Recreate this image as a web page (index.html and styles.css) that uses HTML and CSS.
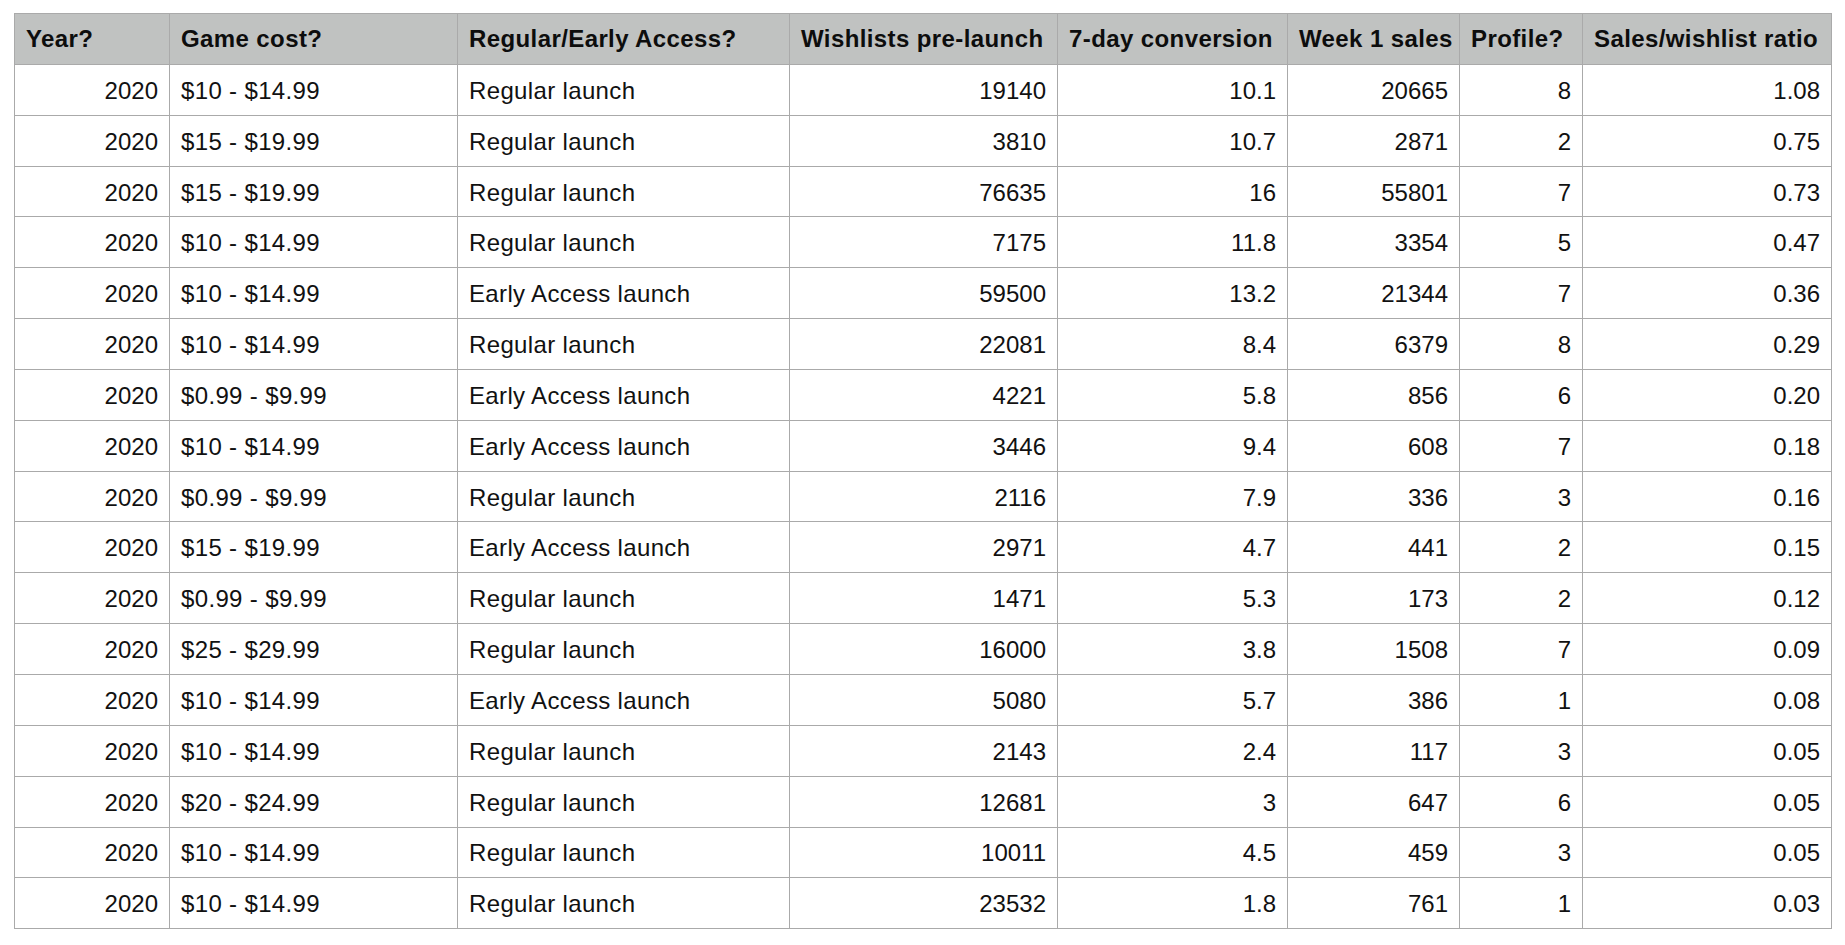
FILE: index.html
```html
<!DOCTYPE html>
<html>
<head>
<meta charset="utf-8">
<link rel="stylesheet" href="styles.css">
</head>
<body>
<div class="page">
<table class="sheet">
<colgroup>
<col class="c1"><col class="c2"><col class="c3"><col class="c4"><col class="c5"><col class="c6"><col class="c7"><col class="c8">
</colgroup>
<thead>
<tr><th>Year?</th><th>Game cost?</th><th>Regular/Early Access?</th><th>Wishlists pre-launch</th><th>7-day conversion</th><th>Week 1 sales</th><th>Profile?</th><th>Sales/wishlist ratio</th></tr>
</thead>
<tbody>
<tr><td class="n">2020</td><td>$10 - $14.99</td><td>Regular launch</td><td class="n">19140</td><td class="n">10.1</td><td class="n">20665</td><td class="n">8</td><td class="n">1.08</td></tr>
<tr><td class="n">2020</td><td>$15 - $19.99</td><td>Regular launch</td><td class="n">3810</td><td class="n">10.7</td><td class="n">2871</td><td class="n">2</td><td class="n">0.75</td></tr>
<tr><td class="n">2020</td><td>$15 - $19.99</td><td>Regular launch</td><td class="n">76635</td><td class="n">16</td><td class="n">55801</td><td class="n">7</td><td class="n">0.73</td></tr>
<tr><td class="n">2020</td><td>$10 - $14.99</td><td>Regular launch</td><td class="n">7175</td><td class="n">11.8</td><td class="n">3354</td><td class="n">5</td><td class="n">0.47</td></tr>
<tr><td class="n">2020</td><td>$10 - $14.99</td><td>Early Access launch</td><td class="n">59500</td><td class="n">13.2</td><td class="n">21344</td><td class="n">7</td><td class="n">0.36</td></tr>
<tr><td class="n">2020</td><td>$10 - $14.99</td><td>Regular launch</td><td class="n">22081</td><td class="n">8.4</td><td class="n">6379</td><td class="n">8</td><td class="n">0.29</td></tr>
<tr><td class="n">2020</td><td>$0.99 - $9.99</td><td>Early Access launch</td><td class="n">4221</td><td class="n">5.8</td><td class="n">856</td><td class="n">6</td><td class="n">0.20</td></tr>
<tr><td class="n">2020</td><td>$10 - $14.99</td><td>Early Access launch</td><td class="n">3446</td><td class="n">9.4</td><td class="n">608</td><td class="n">7</td><td class="n">0.18</td></tr>
<tr><td class="n">2020</td><td>$0.99 - $9.99</td><td>Regular launch</td><td class="n">2116</td><td class="n">7.9</td><td class="n">336</td><td class="n">3</td><td class="n">0.16</td></tr>
<tr><td class="n">2020</td><td>$15 - $19.99</td><td>Early Access launch</td><td class="n">2971</td><td class="n">4.7</td><td class="n">441</td><td class="n">2</td><td class="n">0.15</td></tr>
<tr><td class="n">2020</td><td>$0.99 - $9.99</td><td>Regular launch</td><td class="n">1471</td><td class="n">5.3</td><td class="n">173</td><td class="n">2</td><td class="n">0.12</td></tr>
<tr><td class="n">2020</td><td>$25 - $29.99</td><td>Regular launch</td><td class="n">16000</td><td class="n">3.8</td><td class="n">1508</td><td class="n">7</td><td class="n">0.09</td></tr>
<tr><td class="n">2020</td><td>$10 - $14.99</td><td>Early Access launch</td><td class="n">5080</td><td class="n">5.7</td><td class="n">386</td><td class="n">1</td><td class="n">0.08</td></tr>
<tr><td class="n">2020</td><td>$10 - $14.99</td><td>Regular launch</td><td class="n">2143</td><td class="n">2.4</td><td class="n">117</td><td class="n">3</td><td class="n">0.05</td></tr>
<tr><td class="n">2020</td><td>$20 - $24.99</td><td>Regular launch</td><td class="n">12681</td><td class="n">3</td><td class="n">647</td><td class="n">6</td><td class="n">0.05</td></tr>
<tr><td class="n">2020</td><td>$10 - $14.99</td><td>Regular launch</td><td class="n">10011</td><td class="n">4.5</td><td class="n">459</td><td class="n">3</td><td class="n">0.05</td></tr>
<tr><td class="n">2020</td><td>$10 - $14.99</td><td>Regular launch</td><td class="n">23532</td><td class="n">1.8</td><td class="n">761</td><td class="n">1</td><td class="n">0.03</td></tr>
</tbody>
</table>
</div>
</body>
</html>
```
FILE: styles.css
```css
html, body {
  margin: 0;
  padding: 0;
  background: #ffffff;
}
.page {
  padding: 13px 0 0 14px;
}
.sheet {
  border-collapse: collapse;
  table-layout: fixed;
  width: 1817px;
  font-family: "Liberation Sans", Arial, sans-serif;
  font-size: 24px;
  color: #111111;
}
.c1 { width: 155px; }
.c2 { width: 288px; }
.c3 { width: 332px; }
.c4 { width: 268px; }
.c5 { width: 230px; }
.c6 { width: 172px; }
.c7 { width: 123px; }
.c8 { width: 249px; }
.sheet th,
.sheet td {
  border: 1px solid #aaaaaa;
  white-space: nowrap;
  overflow: hidden;
  vertical-align: middle;
  text-align: left;
}
.sheet th {
  padding: 0 10px 0 11px;
  height: 49.9px;
  background: #c0c2c1;
  font-weight: bold;
  color: #0d0d0d;
  letter-spacing: 0.4px;
}
.sheet td {
  padding: 2px 11px 0;
  height: 47.85px;
  letter-spacing: 0.35px;
}
.sheet td.n {
  text-align: right;
  letter-spacing: 0;
}
```
